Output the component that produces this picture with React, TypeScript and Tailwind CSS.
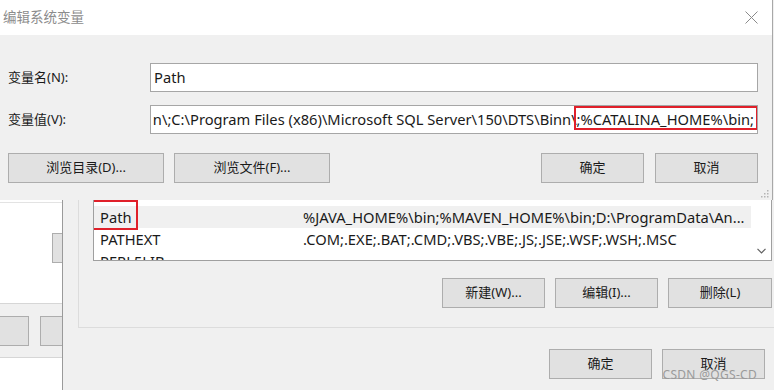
import React from 'react';

const FONT = '"Noto Sans", "Noto Sans CJK SC", sans-serif';

function WinButton({ label, className = '' }: { label: string; className?: string }) {
  return (
    <div
      className={`flex items-center justify-center h-[30px] bg-[#e1e1e1] border border-[#adadad] text-[13px] text-[#1a1a1a] ${className}`}
    >
      {label}
    </div>
  );
}

function CloseIcon() {
  return (
    <svg width="13" height="13" viewBox="0 0 13 13" fill="none" stroke="#8a8a8a" strokeWidth="1">
      <path d="M0.5 0.5 L12.5 12.5 M12.5 0.5 L0.5 12.5" />
    </svg>
  );
}

function Grip() {
  return (
    <svg width="8" height="8" viewBox="0 0 8 8" fill="#b4b4b4">
      <rect x="6" y="0" width="1.5" height="1.5" />
      <rect x="3" y="3" width="1.5" height="1.5" />
      <rect x="6" y="3" width="1.5" height="1.5" />
      <rect x="0" y="6" width="1.5" height="1.5" />
      <rect x="3" y="6" width="1.5" height="1.5" />
      <rect x="6" y="6" width="1.5" height="1.5" />
    </svg>
  );
}

function EditDialog() {
  return (
    <div className="absolute left-0 top-0 w-[773px] h-[200px] flex flex-col border-r border-[#a8a8a8] bg-[#f0f0f0]">
      {/* Title bar */}
      <div className="h-[35px] bg-white flex items-center justify-between pl-[3px] pr-[14px] shrink-0">
        <span className="text-[13.5px] text-[#8c8c8c]">编辑系统变量</span>
        <CloseIcon />
      </div>

      {/* Body */}
      <div className="relative flex-1 flex flex-col pl-[8px] pr-[14px] pt-[28px]">
        <div className="flex items-center h-[29px]">
          <span className="w-[142px] text-[13px] text-[#1a1a1a]">变量名(N):</span>
          <div className="flex-1 h-[29px] bg-white border border-[#a6a6a6] flex items-center px-[3px] text-[14.7px] text-[#1a1a1a]">
            Path
          </div>
        </div>
        <div className="flex items-center h-[29px] mt-[13px]">
          <span className="w-[142px] text-[13px] text-[#1a1a1a]">变量值(V):</span>
          <div className="flex-1 h-[29px] bg-white border border-[#a6a6a6] flex items-center justify-end overflow-hidden whitespace-nowrap pr-[3px] text-[14.7px] text-[#1a1a1a]">
            <span className="relative">
              n\;C:\Program Files (x86)\Microsoft SQL Server\150\DTS\Binn\;%CATALINA_HOME%\bin;
              <span className="absolute right-[-4px] top-[-2px] w-[184px] h-[24px] border-2 border-[#e0202a]" />
            </span>
          </div>
        </div>
        <div className="flex items-center mt-[19px]">
          <WinButton label="浏览目录(D)..." className="w-[156px]" />
          <WinButton label="浏览文件(F)..." className="w-[156px] ml-[10px]" />
          <div className="flex-1" />
          <WinButton label="确定" className="w-[103px]" />
          <WinButton label="取消" className="w-[103px] ml-[11px]" />
        </div>
        <div className="absolute right-[3px] bottom-[2px]">
          <Grip />
        </div>
      </div>
    </div>
  );
}

function LeftStrip() {
  return (
    <div className="w-[63px] shrink-0 h-full bg-white border-r border-[#9a9a9a] flex flex-col pt-[202px]">
      <div className="border-t border-[#e3e3e3] h-[101px] relative">
        <div className="absolute right-0 top-[30px] w-[10px] h-[30px] bg-[#e1e1e1] border border-r-0 border-[#adadad]" />
      </div>
      <div className="h-[55px] bg-[#f0f0f0] border-t border-b border-[#d6d6d6] flex items-center gap-[11px]">
        <div className="w-[29px] h-[30px] bg-[#e1e1e1] border border-l-0 border-[#adadad]" />
        <div className="flex-1 h-[30px] bg-[#e1e1e1] border border-r-0 border-[#adadad]" />
      </div>
    </div>
  );
}

function EnvDialog() {
  const rows = [
    { name: 'Path', value: '%JAVA_HOME%\\bin;%MAVEN_HOME%\\bin;D:\\ProgramData\\An...', selected: true },
    { name: 'PATHEXT', value: '.COM;.EXE;.BAT;.CMD;.VBS;.VBE;.JS;.JSE;.WSF;.WSH;.MSC', selected: false },
    { name: 'PERL5LIB', value: '', selected: false },
  ];
  return (
    <div className="flex-1 h-full bg-[#f0f0f0] flex flex-col pl-[15px] pt-[190px]">
      {/* Group box */}
      <div className="h-[138px] border-l border-b border-[#dcdcdc] pl-[14px] flex flex-col">
        <div className="h-[71px] bg-white border border-[#9f9f9f] mr-[2px] flex text-[14.7px] text-[#1a1a1a]">
          <div className="flex-1 flex flex-col pt-[15px] overflow-hidden">
            {rows.map((r) => (
              <div
                key={r.name}
                className={`h-[22px] shrink-0 flex items-center whitespace-nowrap ${r.selected ? 'bg-[#f0f0f0]' : ''}`}
              >
                <span className="w-[209px] pl-[6px] relative">
                  {r.name}
                  {r.selected && (
                    <span className="absolute left-[-2px] top-[-6px] w-[46px] h-[30px] border-2 border-[#e0202a]" />
                  )}
                </span>
                <span>{r.value}</span>
              </div>
            ))}
          </div>
          <div className="w-[20px] flex items-end justify-center pb-[6px]">
            <svg width="9" height="6" viewBox="0 0 9 6" fill="none" stroke="#606060" strokeWidth="1.2">
              <path d="M0.5 0.8 L4.5 4.8 L8.5 0.8" />
            </svg>
          </div>
        </div>
        <div className="flex justify-end mt-[17px] gap-[10px] mr-[2px]">
          <WinButton label="新建(W)..." className="w-[103px]" />
          <WinButton label="编辑(I)..." className="w-[103px]" />
          <WinButton label="删除(L)" className="w-[104px]" />
        </div>
      </div>
      <div className="flex justify-end gap-[10px] mt-[21px] mr-[9px] relative">
        <WinButton label="确定" className="w-[103px]" />
        <WinButton label="取消" className="w-[103px]" />
        <span className="absolute right-[8px] top-[19px] text-[12px] leading-[14px] text-[#9a9a9a] tracking-[0.3px]">CSDN @QGS-CD</span>
      </div>
    </div>
  );
}

export default function App() {
  return (
    <div className="relative w-[774px] h-[390px] overflow-hidden bg-white" style={{ fontFamily: FONT }}>
      <div className="flex h-full">
        <LeftStrip />
        <EnvDialog />
      </div>
      <EditDialog />
    </div>
  );
}
